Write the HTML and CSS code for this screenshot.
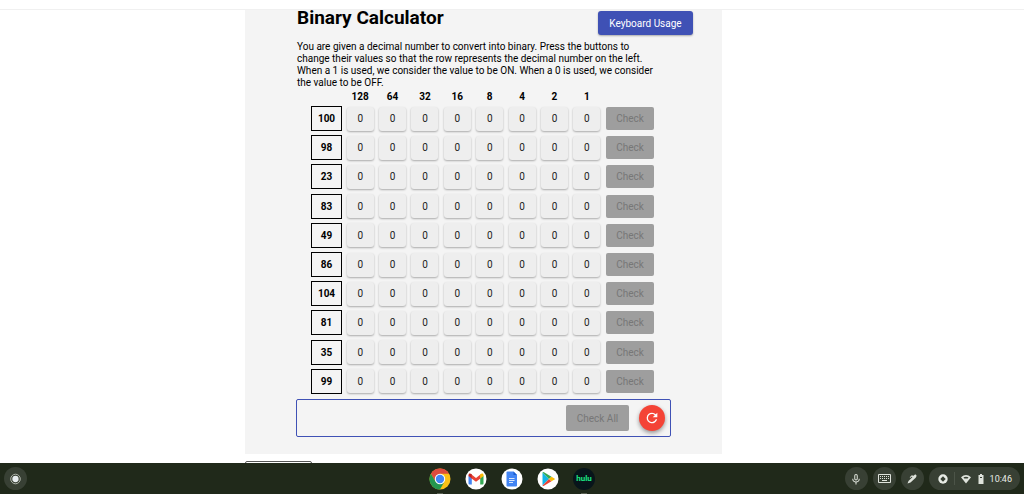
FILE: index.html
```html
<!DOCTYPE html>
<html lang="en">
<head>
    <meta charset="UTF-8">
    <meta name="viewport" content="width=device-width, initial-scale=1.0">
    <title>Binary Calculator</title>
    <link rel="stylesheet" href="styles.css">
</head>
<body>
<div class="page">
    <div class="toolbar"></div>
    <main class="panel">
        <div class="panel-header">
            <h1>Binary Calculator</h1>
            <button type="button" class="usage">Keyboard Usage</button>
        </div>
        <p class="intro">You are given a decimal number to convert into binary. Press the buttons to change their values so that the row represents the decimal number on the left. When a 1 is used, we consider the value to be ON. When a 0 is used, we consider the value to be OFF.</p>
        <table class="board">
            <thead>
                <tr>
                    <td class="number-col"></td>
                    <th>128</th>
                    <th>64</th>
                    <th>32</th>
                    <th>16</th>
                    <th>8</th>
                    <th>4</th>
                    <th>2</th>
                    <th>1</th>
                    <td class="check-col"></td>
                </tr>
            </thead>
            <tbody id="rows"></tbody>
        </table>
        <div class="actions">
            <button type="button" class="check check-all" disabled>Check All</button>
            <button type="button" class="reset" aria-label="Reset">
                <svg viewBox="0 0 24 24" width="16" height="16"><path fill="#fff" d="M17.65 6.35A7.96 7.96 0 0 0 12 4a8 8 0 1 0 7.73 10h-2.08A6 6 0 1 1 12 6c1.66 0 3.14.69 4.22 1.78L13 11h7V4z"/></svg>
            </button>
        </div>
    </main>
    <div class="next-card"></div>
</div>
<footer class="shelf">
    <div class="shelf-side">
        <button type="button" class="round" aria-label="Launcher">
            <svg viewBox="0 0 24 24" width="24" height="24"><circle cx="12" cy="12" r="5" fill="none" stroke="#b4b9b0"/><circle cx="12" cy="12" r="3.3" fill="#e8edf0"/></svg>
        </button>
    </div>
    <div class="apps">
        <button type="button" class="app running" aria-label="Chrome">
            <svg viewBox="0 0 22 22"><circle cx="11" cy="11" r="10.5" fill="#fbc116"/><path fill="#dd4b3e" d="M1.9 5.75A10.5 10.5 0 0 1 20.1 5.75H11L6.5 13.6z"/><path fill="#24964f" d="M1.9 5.75A10.5 10.5 0 0 0 11 21.5L15.5 13.6 6.5 13.6z"/><circle cx="11" cy="11" r="5.2" fill="#fff"/><circle cx="11" cy="11" r="4.2" fill="#4285f4"/></svg>
        </button>
        <button type="button" class="app" aria-label="Gmail">
            <svg viewBox="0 0 22 22"><circle cx="11" cy="11" r="10.5" fill="#fff"/><path fill="#4285f4" d="M3.5 7.5 6.8 10v6.5H4.5a1 1 0 0 1-1-1z"/><path fill="#34a853" d="M18.5 7.5 15.2 10v6.5h2.3a1 1 0 0 0 1-1z"/><path fill="#ea4335" d="M6.2 6.2 11 9.9l4.8-3.7v4L11 13.8l-4.8-3.6z"/><path fill="#c5221f" d="M3.5 8V7c0-1.7 1.7-2.1 3.3-.7v4.2z"/><path fill="#fbbc04" d="M18.5 8V7c0-1.7-1.7-2.1-3.3-.7v4.2z"/></svg>
        </button>
        <button type="button" class="app" aria-label="Docs">
            <svg viewBox="0 0 22 22"><circle cx="11" cy="11" r="10.5" fill="#fff"/><path fill="#4285f4" d="M6.5 3.5h6L16 7v10.5a1 1 0 0 1-1 1H6.5a1 1 0 0 1-1-1v-13a1 1 0 0 1 1-1z"/><path fill="#1a5fd0" d="M12.5 3.5V7H16z"/><path stroke="#d8e6fc" stroke-width="1" d="M8 10.5h5.5M8 12.5h5.5M8 14.5h4"/></svg>
        </button>
        <button type="button" class="app" aria-label="Play Store">
            <svg viewBox="0 0 22 22"><circle cx="11" cy="11" r="10.5" fill="#fff"/><path fill="#12b5e8" d="M5.5 4.5v13L12 11z"/><path fill="#ea4335" d="M5.5 17.5 12 11l2.5 2.3-7.5 4.5q-1 .5-1.5-.3z"/><path fill="#34a853" d="M5.5 4.5 12 11l2.5-2.3L7 4.2q-1-.5-1.5.3z"/><path fill="#fbbc04" d="M14.5 8.7 12 11l2.5 2.3 3-1.7q.8-.6 0-1.2z"/></svg>
        </button>
        <button type="button" class="app hulu running">hulu</button>
    </div>
    <div class="shelf-side tray">
        <button type="button" class="round" aria-label="Dictation">
            <svg viewBox="0 0 24 24" width="12" height="12"><path fill="#dfe3dc" d="M12 15a3.5 3.5 0 0 0 3.5-3.5v-6a3.5 3.5 0 0 0-7 0v6A3.5 3.5 0 0 0 12 15zm-1.5-9.5a1.5 1.5 0 0 1 3 0v6a1.5 1.5 0 0 1-3 0zM19.5 11.5h-2a5.5 5.5 0 0 1-11 0h-2a7.5 7.5 0 0 0 6.5 7.4V23h2v-4.1a7.5 7.5 0 0 0 6.5-7.4z"/></svg>
        </button>
        <button type="button" class="round" aria-label="On-screen keyboard">
            <svg viewBox="0 0 13 9" width="13" height="9"><path fill="none" stroke="#dfe3dc" d="M.5.5h12v8H.5z"/><path stroke="#dfe3dc" stroke-dasharray="1 1" d="M2 2.5h9M2 4.5h9"/><path stroke="#dfe3dc" d="M4 6.5h5"/></svg>
        </button>
        <button type="button" class="round" aria-label="Stylus">
            <svg viewBox="0 0 12 12" width="12" height="12"><path fill="#dfe3dc" d="M1.5 10.5 2.5 8 6.500 4 5.500 3.800 4.300 5 3.700 4.300 5.800 2.200 7.500 2.800 9.300 1.300l1.400 1.400-1 2L4.500 9.500z"/></svg>
        </button>
        <button type="button" class="status">
            <svg viewBox="0 0 12 12" width="12" height="12"><circle cx="6" cy="6" r="4.7" fill="#e8ece6"/><path fill="#384034" d="M6 3.300 8.700 6 6 8.700 3.300 6z"/></svg>
            <span class="divider"></span>
            <svg viewBox="0 0 12 12" width="12" height="12"><path fill="#dfe3dc" fill-rule="evenodd" d="M1 4.2Q6 0 11 4.200L6 10.500zM3.500 4.300 4.300 5.500H7.700L8.500 4.300Q6 3 3.500 4.300z"/></svg>
            <svg viewBox="0 0 8 12" width="8" height="12"><path fill="#dfe3dc" d="M3 1h2v1h1.5v9h-5V2H3z"/><path fill="#384034" d="M3 4h2v1H3z"/></svg>
            <span class="clock">10:46</span>
        </button>
    </div>
</footer>
<script>
    const numbers = [100, 98, 23, 83, 49, 86, 104, 81, 35, 99];
    const bits = [128, 64, 32, 16, 8, 4, 2, 1];
    const rows = document.getElementById('rows');

    numbers.forEach(function(number) {
        const row = document.createElement('tr');
        let html = '<th scope="row"><div class="number">' + number + '</div></th>';
        bits.forEach(function(bit) {
            html += '<td><button type="button" class="bit" data-value="' + bit + '">0</button></td>';
        });
        html += '<td><button type="button" class="check" disabled>Check</button></td>';
        row.innerHTML = html;
        rows.appendChild(row);
    });

    rows.addEventListener('click', function(e) {
        if (e.target.classList.contains('bit')) {
            e.target.textContent = e.target.textContent === '0' ? '1' : '0';
        }
    });
</script>
</body>
</html>
```
FILE: styles.css
```css
* {
    box-sizing: border-box;
}
body {
    display: flex;
    flex-direction: column;
    height: 100vh;
    margin: 0;
    font-family: Roboto, "Liberation Sans", sans-serif;
    font-size: 10px;
    color: #000;
    background-color: #fff;
}
button {
    padding: 0;
    border: none;
    font-family: inherit;
    font-size: 10px;
    cursor: pointer;
}
svg {
    display: block;
}

/* page */
.page {
    flex: 1;
    min-height: 0;
    overflow: hidden;
}
.toolbar {
    height: 10px;
    border-bottom: 1px solid #f0f0f0;
}
.panel {
    max-width: 477px;
    margin-left: 245px;
    padding: 0 51px 17px;
    background-color: #f4f4f4;
}
.panel-header {
    display: flex;
    justify-content: space-between;
    align-items: flex-start;
    margin-right: -22px;
    height: 31px;
}
h1 {
    margin: -2px 0 0 1px;
    font-size: 19px;
    line-height: 20px;
}
.usage {
    width: 95px;
    height: 24px;
    margin-top: 1px;
    border-radius: 3px;
    background-color: #3f51b5;
    color: #fff;
    box-shadow: 0 1px 2px rgba(0, 0, 0, 0.3);
}
.intro {
    margin: 0 8px 0 1px;
    line-height: 12px;
}

/* board */
.board {
    width: 348px;
    height: 306px;
    margin: 1px 0 0 13px;
    table-layout: fixed;
    border-collapse: collapse;
}
.board th,
.board td {
    padding: 0;
    text-align: center;
}
.board thead tr {
    height: 14px;
    line-height: 12px;
}
.number-col {
    width: 35px;
}
.check-col {
    width: 54px;
}
.number {
    width: 31px;
    height: 25px;
    margin: 0 auto;
    border: 1px solid #000;
    line-height: 23px;
}
.bit {
    width: 27px;
    height: 24px;
    border-radius: 3px;
    background-color: #eee;
    color: #222;
    box-shadow: 0 1px 2px rgba(0, 0, 0, 0.3);
    vertical-align: middle;
}
.check {
    width: 48px;
    height: 23px;
    border-radius: 2px;
    background-color: #9e9e9e;
    color: #777;
    vertical-align: middle;
    cursor: default;
}
.actions {
    display: flex;
    justify-content: flex-end;
    align-items: center;
    gap: 10px;
    height: 38px;
    margin-top: 3px;
    padding-right: 5px;
    border: 1px solid #3f51b5;
    border-radius: 2px;
}
.check-all {
    width: 63px;
    height: 26px;
}
.reset {
    display: flex;
    align-items: center;
    justify-content: center;
    width: 26px;
    height: 26px;
    border-radius: 50%;
    background-color: #f44336;
    box-shadow: 0 2px 4px rgba(0, 0, 0, 0.4);
}
.next-card {
    width: 67px;
    height: 30px;
    margin: 7px 0 0 245px;
    border: 1px solid #555;
    border-radius: 2px;
}

/* shelf */
.shelf {
    display: flex;
    align-items: center;
    height: 31px;
    padding: 0 4px;
    background-color: #20291a;
}
.shelf-side {
    display: flex;
    flex: 1;
    align-items: center;
    gap: 5px;
}
.tray {
    justify-content: flex-end;
}
.round {
    display: flex;
    align-items: center;
    justify-content: center;
    width: 23px;
    height: 23px;
    border-radius: 50%;
    background-color: #384034;
}
.apps {
    display: flex;
    gap: 14px;
}
.app {
    position: relative;
    width: 22px;
    height: 22px;
    border-radius: 50%;
    background-color: transparent;
}
.running::after {
    content: "";
    position: absolute;
    left: 8px;
    bottom: -4px;
    width: 6px;
    height: 1px;
    background-color: #596052;
}
.hulu {
    background-color: #08151b;
    color: #1ce783;
    font-size: 8px;
    font-weight: bold;
}
.status {
    display: flex;
    align-items: center;
    gap: 5px;
    height: 23px;
    padding: 0 8px;
    border-radius: 12px;
    background-color: #384034;
    color: #e8ece6;
}
.divider {
    width: 1px;
    height: 13px;
    background-color: #4c5448;
}
.clock {
    font-size: 9px;
}
```
